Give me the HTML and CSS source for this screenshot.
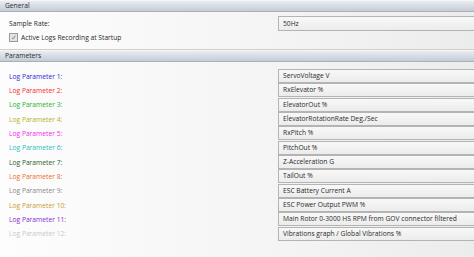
FILE: index.html
```html
<!DOCTYPE html>
<html lang="en">
<head>
    <meta charset="UTF-8">
    <title>Log Settings</title>
    <link rel="stylesheet" href="styles.css">
</head>
<body>
    <div class="panel">
        <div class="section-header">General</div>
        <div class="section general">
            <div class="row">
                <span class="label">Sample Rate:</span>
                <div class="field">50Hz</div>
            </div>
            <div class="check-row">
                <span class="checkbox">&#10003;</span>
                <span>Active Logs Recording at Startup</span>
            </div>
        </div>

        <div class="section-header">Parameters</div>
        <div class="section params">
            <div class="param"><span class="label c1">Log Parameter 1:</span><div class="field">ServoVoltage V</div></div>
            <div class="param"><span class="label c2">Log Parameter 2:</span><div class="field">RxElevator %</div></div>
            <div class="param"><span class="label c3">Log Parameter 3:</span><div class="field">ElevatorOut %</div></div>
            <div class="param"><span class="label c4">Log Parameter 4:</span><div class="field">ElevatorRotationRate Deg./Sec</div></div>
            <div class="param"><span class="label c5">Log Parameter 5:</span><div class="field">RxPitch %</div></div>
            <div class="param"><span class="label c6">Log Parameter 6:</span><div class="field">PitchOut %</div></div>
            <div class="param"><span class="label c7">Log Parameter 7:</span><div class="field">Z-Acceleration G</div></div>
            <div class="param"><span class="label c8">Log Parameter 8:</span><div class="field">TailOut %</div></div>
            <div class="param"><span class="label c9">Log Parameter 9:</span><div class="field">ESC Battery Current A</div></div>
            <div class="param"><span class="label c10">Log Parameter 10:</span><div class="field">ESC Power Output PWM %</div></div>
            <div class="param"><span class="label c11">Log Parameter 11:</span><div class="field">Main Rotor 0-3000 HS RPM from GOV connector filtered</div></div>
            <div class="param"><span class="label c12">Log Parameter 12:</span><div class="field">Vibrations graph / Global Vibrations %</div></div>
        </div>
    </div>
</body>
</html>
```

FILE: styles.css
```css
body {
    margin: 0;
    font-family: "Open Sans", "Liberation Sans", sans-serif;
    font-size: 6.7px;
    color: #2a2a2a;
    background: #fff;
    white-space: nowrap;
}
.panel {
    width: 474px;
    height: 257px;
    overflow: hidden;
    background: linear-gradient(to right, #fdfdfd, #f4f4f4 60%, #ececec);
}
.section-header {
    height: 10px;
    line-height: 10px;
    padding-left: 5px;
    color: #2a2a2a;
    background: linear-gradient(to bottom, #e8ecf2, #c6ccd6);
    border-top: 1px solid #f4f6f8;
    border-bottom: 1px solid #a8b0bc;
}
.general {
    height: 33px;
    padding: 4px 0 0 9px;
    border-bottom: 1px solid #d8ccc0;
}
.row {
    display: flex;
    align-items: center;
    height: 15px;
}
.label {
    width: 269px;
    flex: none;
}
.field {
    flex: 1;
    box-sizing: border-box;
    padding-left: 4px;
    border: 1px solid #b4b4b4;
    border-right: none;
    background: linear-gradient(to bottom, #f8f8f8, #ececec);
    color: #2a2a2a;
}
.row .field {
    height: 15px;
    line-height: 13px;
}
.check-row {
    display: flex;
    align-items: center;
    gap: 3px;
    margin-top: 1px;
    height: 11px;
}
.checkbox {
    width: 7px;
    height: 7px;
    border: 1px solid #999;
    background: #e4e4e4;
    font-size: 7px;
    line-height: 7px;
    text-align: center;
    color: #777;
}
.params {
    padding: 7px 0 0 9px;
}
.param {
    display: flex;
    align-items: center;
    height: 14.33px;
}
.param .field {
    height: 14px;
    line-height: 12px;
}
.c1 { color: #2828d8; }
.c2 { color: #f82828; }
.c3 { color: #28b028; }
.c4 { color: #b8b028; }
.c5 { color: #f028f0; }
.c6 { color: #28c0c0; }
.c7 { color: #286028; }
.c8 { color: #e86c28; }
.c9 { color: #888888; }
.c10 { color: #c89c30; }
.c11 { color: #8828d8; }
.c12 { color: #c8c8c8; }
```
